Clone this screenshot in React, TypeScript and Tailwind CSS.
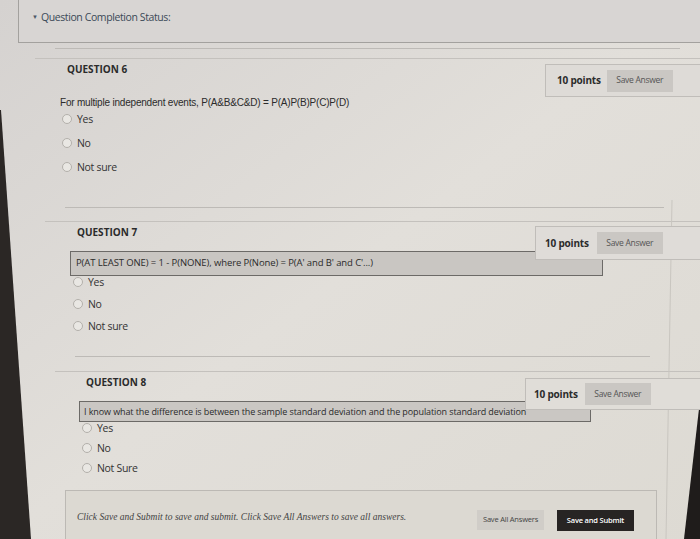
const Radio = ({ label }: { label: string }) => (
  <div className="flex items-center gap-[5px] h-[14px]">
    <span className="w-[10px] h-[10px] rounded-full border border-[#b3b0ab] bg-[#e9e7e3]" />
    <span className="text-[10.5px] leading-[14px] text-[#333] tracking-[-0.3px]">{label}</span>
  </div>
);

const SaveAnswer = () => (
  <button className="w-[66px] h-[22px] bg-[#cac7c3] text-[8.5px] text-[#555] tracking-[-0.3px]">
    Save Answer
  </button>
);

const Separators = ({ top, gap, a, b }: { top: string; gap: string; a: string; b: string }) => (
  <div className={top}>
    <div className={`h-px bg-[#bdbab6] ${a}`} />
    <div className={`h-px bg-[#c4c1bd] ${gap} ${b}`} />
  </div>
);

const App = () => {
  return (
    <div
      className="relative w-[700px] h-[539px] overflow-hidden bg-linear-to-br from-[#d5d2d0] via-[#e2dfda] to-[#dddad3] text-[#2b2b2b]"
      style={{ fontFamily: '"Open Sans", "Liberation Sans", sans-serif' }}
    >
      {/* completion status bar */}
      <div className="h-[43px] ml-[18px] border-l border-b border-[#a3a19e] bg-[#d8d5d3] pl-[13px] pt-[9px] flex items-start gap-[3px]">
        <span className="text-[6px] leading-[16px] text-[#4a5866]">▼</span>
        <span className="text-[10.5px] leading-[16px] text-[#3b4957] tracking-[-0.4px]">Question Completion Status:</span>
      </div>
      <Separators top="mt-[5px]" gap="mt-[9px]" a="ml-[55px] mr-[20px]" b="ml-[35px]" />

      {/* QUESTION 6 */}
      <div className="mt-[3px] flex items-start justify-between">
        <div className="pl-[67px] text-[10px] leading-[14px] font-bold">QUESTION 6</div>
        <div className="mt-[2px] w-[155px] h-[33px] border-l border-y border-[#c0bdb9] bg-[#dedbd7] flex items-center gap-[6px] pl-[11px]">
          <span className="text-[10px] font-bold tracking-[-0.2px]">10 points</span>
          <SaveAnswer />
        </div>
      </div>
      <div className="pl-[60px] text-[10px] leading-[12px] tracking-[-0.2px]" style={{ fontFamily: '"Liberation Sans", Arial, sans-serif' }}>
        For multiple independent events, P(A&amp;B&amp;C&amp;D) = P(A)P(B)P(C)P(D)
      </div>
      <div className="mt-[3px] pl-[62px] flex flex-col gap-[10px]">
        <Radio label="Yes" />
        <Radio label="No" />
        <Radio label="Not sure" />
      </div>

      <Separators top="mt-[33px]" gap="mt-[13px]" a="ml-[65px] mr-[36px]" b="ml-[45px]" />

      {/* QUESTION 7 */}
      <div className="mt-[3px] flex items-start justify-between">
        <div className="pl-[77px] text-[10px] leading-[14px] font-bold">QUESTION 7</div>
        <div className="relative z-10 mt-[1px] mb-[-9px] w-[165px] h-[34px] border-l border-y border-[#c0bdb9] bg-[#dfdcd8] flex items-center gap-[8px] pl-[9px]">
          <span className="text-[10px] font-bold tracking-[-0.2px]">10 points</span>
          <SaveAnswer />
        </div>
      </div>
      <div className="ml-[70px] w-[533px] h-[25px] border border-[#6c6a67] bg-[#c9c6c2] pl-[5px] flex items-center text-[9.5px] tracking-[-0.1px]">
        P(AT LEAST ONE) = 1 - P(NONE), where P(None) = P(A' and B' and C'...)
      </div>
      <div className="mt-[-1px] pl-[73px] flex flex-col gap-[8px]">
        <Radio label="Yes" />
        <Radio label="No" />
        <Radio label="Not sure" />
      </div>

      <Separators top="mt-[23px]" gap="mt-[14px]" a="ml-[75px] mr-[50px]" b="ml-[55px]" />

      {/* QUESTION 8 */}
      <div className="mt-[3px] flex items-start justify-between">
        <div className="pl-[86px] text-[10px] leading-[14px] font-bold">QUESTION 8</div>
        <div className="relative z-10 mt-[3px] mb-[-9px] w-[175px] h-[32px] border-l border-y border-[#c0bdb9] bg-[#e0ddd8] flex items-center gap-[7px] pl-[8px]">
          <span className="text-[10px] font-bold tracking-[-0.2px]">10 points</span>
          <SaveAnswer />
        </div>
      </div>
      <div className="ml-[79px] w-[512px] h-[21px] border border-[#6c6a67] bg-[#cac7c3] pl-[4px] flex items-center text-[9px] tracking-[-0.1px]">
        I know what the difference is between the sample standard deviation and the population standard deviation
      </div>
      <div className="mt-[-1px] pl-[82px] flex flex-col gap-[6px]">
        <Radio label="Yes" />
        <Radio label="No" />
        <Radio label="Not Sure" />
      </div>

      {/* submit bar */}
      <div className="mt-[15px] ml-[65px] w-[592px] h-[60px] border-l border-t border-r border-[#bcb9b4] bg-[#dcd9d2] pl-[11px] pr-[22px] pt-[19px] flex items-start">
        <span className="text-[9.5px] italic text-[#444] leading-[14px]" style={{ fontFamily: '"Liberation Serif", "DejaVu Serif", serif' }}>
          Click Save and Submit to save and submit. Click Save All Answers to save all answers.
        </span>
        <div className="ml-auto flex items-start gap-[13px]">
          <button className="w-[67px] h-[20px] bg-[#d0cdc8] text-[7.5px] text-[#444] tracking-[-0.2px]">Save All Answers</button>
          <button className="w-[77px] h-[21px] bg-[#272423] text-[7.5px] text-white font-semibold tracking-[-0.2px]">Save and Submit</button>
        </div>
      </div>

      {/* monitor bezel edges in the photo */}
      <svg className="absolute inset-0 pointer-events-none" width="700" height="539" viewBox="0 0 700 539">
        <polygon points="0,110 1,110 31,539 0,539" fill="#2b2725" />
        <polygon points="700,400 684,539 700,539" fill="#1f1c1b" />
        <line x1="672" y1="200" x2="666" y2="539" stroke="#c9c6c0" strokeWidth="1" />
      </svg>
    </div>
  );
};

export default App;
